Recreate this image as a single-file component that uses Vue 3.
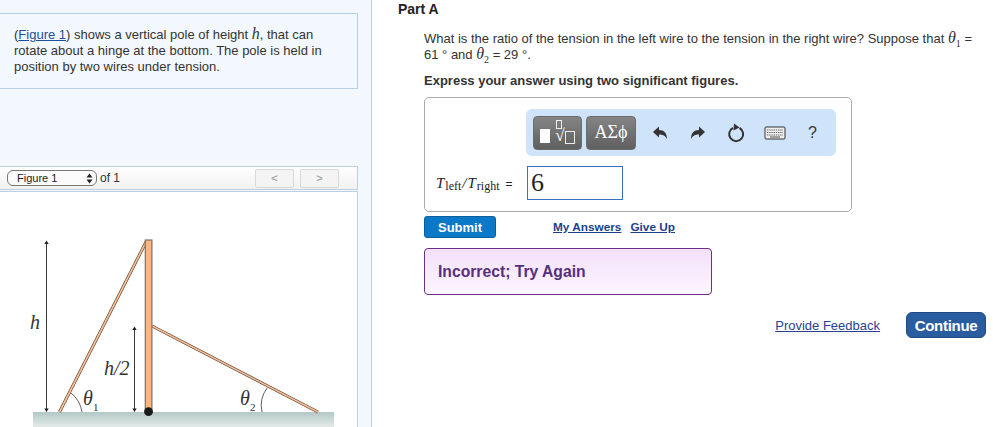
<template>
  <div class="page">
    <aside class="sidebar">
      <div class="statement">
        (<a href="#" class="fig-link">Figure 1</a>) shows a vertical pole of height <i class="math">h</i>, that can<br />
        rotate about a hinge at the bottom. The pole is held in<br />
        position by two wires under tension.
      </div>
      <div class="fig-bar">
        <div class="fig-select">
          <span>Figure 1</span>
          <svg width="7" height="11" viewBox="0 0 7 11"><path d="M3.5 0.5 L6.5 4.5 H0.5Z M3.5 10.5 L6.5 6.5 H0.5Z" fill="#222" /></svg>
        </div>
        <span class="of">of 1</span>
        <div class="pager">
          <button class="page-btn">&lt;</button>
          <button class="page-btn">&gt;</button>
        </div>
      </div>
      <div class="fig-box">
        <svg class="diagram" width="357" height="236" viewBox="0 191 357 236">
          <defs>
            <linearGradient id="ground" x1="0" y1="0" x2="0" y2="1">
              <stop offset="0" stop-color="#b3c8c5" />
              <stop offset="1" stop-color="#e3ebe9" />
            </linearGradient>
          </defs>
          <rect x="33" y="412" width="301" height="15" fill="url(#ground)" />
          <line x1="146" y1="242" x2="59.5" y2="412" stroke="#5a473a" stroke-width="3" />
          <line x1="146" y1="242" x2="59.5" y2="412" stroke="#f8bd92" stroke-width="1.7" />
          <line x1="152" y1="326" x2="318" y2="412" stroke="#5a473a" stroke-width="3" />
          <line x1="152" y1="326" x2="318" y2="412" stroke="#f8bd92" stroke-width="1.7" />
          <rect x="145.3" y="240" width="6.6" height="172" fill="#f8b587" stroke="#77716c" stroke-width="1.2" />
          <circle cx="148.5" cy="411.7" r="4.4" fill="#1a1a1a" />
          <g stroke="#222" stroke-width="0.9" fill="#222">
            <line x1="46.5" y1="242" x2="46.5" y2="411" />
            <path d="M46.5 240.5 l-2.2 3.5 h4.4z M46.5 412 l-2.2 -3.5 h4.4z" stroke="none" />
            <line x1="134.5" y1="328" x2="134.5" y2="411" />
            <path d="M134.5 326.5 l-2.2 3.5 h4.4z M134.5 412 l-2.2 -3.5 h4.4z" stroke="none" />
          </g>
          <path d="M71 393 Q80 400 82 412" fill="none" stroke="#333" stroke-width="0.8" />
          <path d="M267 388 Q259 399 262 412" fill="none" stroke="#333" stroke-width="0.8" />
          <text x="30" y="329" class="lbl">h</text>
          <text x="104" y="375" class="lbl">h/2</text>
          <text x="83" y="405" class="lbl">θ</text>
          <text x="93" y="411" class="sub">1</text>
          <text x="240" y="405" class="lbl">θ</text>
          <text x="250" y="411" class="sub">2</text>
        </svg>
      </div>
    </aside>

    <main class="main">
      <h2 class="part">Part A</h2>
      <div class="question">
        <p class="prompt">
          What is the ratio of the tension in the left wire to the tension in the right wire? Suppose that
          <i class="math">θ</i><sub>1</sub> =<br />61 ° and <i class="math">θ</i><sub>2</sub> = 29 °.
        </p>
        <p class="hint">Express your answer using two significant figures.</p>

        <div class="answer">
          <div class="toolbar">
            <button class="tool">
              <span class="blk"></span>
              <span class="root">
                <span class="root-small"></span>
                <span class="root-sign">√</span>
                <span class="root-box"></span>
              </span>
            </button>
            <button class="tool greek">ΑΣϕ</button>
            <svg class="ico undo" width="20" height="20" viewBox="0 0 20 20"><path d="M3 9 L9 3.5 V7 C14 7 17 10 17 16 C15 12.5 13 11.5 9 11.5 V14.5Z" fill="#333" /></svg>
            <svg class="ico" width="20" height="20" viewBox="0 0 20 20"><path d="M17 9 L11 3.5 V7 C6 7 3 10 3 16 C5 12.5 7 11.5 11 11.5 V14.5Z" fill="#333" /></svg>
            <svg class="ico" width="20" height="20" viewBox="0 0 20 20"><path d="M7 4.9 A7 7 0 1 0 13.5 5" fill="none" stroke="#333" stroke-width="2" /><path d="M8 0.5 L13.5 4.5 L7.5 7.5Z" fill="#333" /></svg>
            <svg class="ico" width="22" height="14" viewBox="0 0 22 14">
              <rect x="1" y="1" width="20" height="12" rx="1" fill="#eee" stroke="#333" stroke-width="1" />
              <path d="M3 4 H19 M3 6.5 H19 M3 9 H19" stroke="#666" stroke-width="1" stroke-dasharray="1.4 0.8" />
              <path d="M6 11 H16" stroke="#555" stroke-width="1" />
            </svg>
            <span class="help">?</span>
          </div>
          <div class="entry">
            <span class="formula"><i>T</i><span class="fs">left</span><i class="slash">/</i><i>T</i><span class="fs">right</span><span class="eq">=</span></span>
            <div class="input">6</div>
          </div>
        </div>

        <div class="actions">
          <button class="submit">Submit</button>
          <div class="links">
            <a href="#">My Answers</a>
            <a href="#">Give Up</a>
          </div>
        </div>

        <div class="feedback">Incorrect; Try Again</div>
      </div>
      <div class="bottom">
        <a href="#" class="provide">Provide Feedback</a>
        <button class="continue">Continue</button>
      </div>
    </main>
  </div>
</template>

<script setup>
</script>

<style>
html, body {
  margin: 0;
  overflow: hidden;
  background: #fff;
}
</style>

<style scoped>
.page {
  display: grid;
  grid-template-columns: 372px 1fr;
  width: 993px;
  height: 427px;
  overflow: hidden;
  font-family: "Liberation Sans", Arial, sans-serif;
  color: #333;
  font-size: 13px;
}
.sidebar {
  box-sizing: border-box;
  height: 427px;
  padding: 13px 13px 0 0;
  background: #f3f8fe;
  border-right: 1px solid #b9cfe2;
}
.statement {
  box-sizing: border-box;
  height: 76px;
  padding: 13px 14px 0;
  line-height: 16px;
  border: 1px solid #b9cfe2;
  border-left: none;
}
.fig-link {
  color: #1c4f9c;
}
.math {
  font-family: "Liberation Serif", serif;
  font-style: italic;
  font-size: 16px;
  line-height: 0;
}
.fig-bar {
  box-sizing: border-box;
  display: flex;
  align-items: center;
  height: 24px;
  margin-top: 77px;
  padding-left: 7px;
  background: linear-gradient(#fff, #f1f1f1);
  border: 1px solid #b9cfe2;
  border-left: none;
  font-size: 12px;
}
.fig-select {
  box-sizing: border-box;
  display: flex;
  align-items: center;
  justify-content: space-between;
  width: 90px;
  height: 16px;
  padding: 0 3px 0 9px;
  border: 1px solid #777;
  border-radius: 6px;
  background: #fbfbfb;
  color: #222;
  font-size: 11px;
}
.of {
  margin-left: 3px;
}
.pager {
  display: flex;
  gap: 6px;
  margin-left: auto;
  margin-right: 18px;
}
.page-btn {
  width: 39px;
  height: 19px;
  padding: 0;
  border: 1px solid #d8d8d8;
  border-radius: 2px;
  background: #f4f4f4;
  color: #aaa;
  font: bold 11px "Liberation Sans", sans-serif;
}
.fig-box {
  box-sizing: border-box;
  height: 236px;
  margin-top: 1px;
  background: #fff;
  border: 1px solid #b9cfe2;
  border-left: none;
  border-bottom: none;
  overflow: hidden;
}
.diagram {
  display: block;
  margin-top: -1px;
}
.lbl {
  font: italic 20px "Liberation Serif", serif;
  fill: #333;
}
.sub {
  font: 11px "Liberation Serif", serif;
  fill: #333;
}
.main {
  padding-left: 26px;
}
.part {
  margin: 1px 0 0;
  font-size: 14px;
  line-height: 16px;
  font-weight: bold;
  color: #222;
}
.question {
  width: 560px;
  margin-left: 26px;
}
.prompt {
  margin: 14px 0 0;
  line-height: 16px;
  font-size: 13px;
}
.prompt sub {
  font: 10px "Liberation Serif", serif;
  line-height: 0;
}
.hint {
  margin: 10px 0 0;
  font-size: 13px;
  line-height: 16px;
  font-weight: bold;
}
.answer {
  box-sizing: border-box;
  width: 428px;
  height: 115px;
  margin-top: 8px;
  padding: 11px 0 0 11px;
  border: 1px solid #aaa;
  border-radius: 5px;
}
.toolbar {
  box-sizing: border-box;
  display: flex;
  align-items: center;
  width: 310px;
  height: 47px;
  margin-left: 90px;
  padding-left: 7px;
  background: #cfe4fb;
  border-radius: 6px;
}
.tool {
  box-sizing: border-box;
  display: flex;
  align-items: center;
  justify-content: center;
  width: 49px;
  height: 34px;
  padding: 0;
  margin-right: 4px;
  border: 1px solid #6c6c6c;
  border-radius: 4px;
  background: linear-gradient(#858585, #5f5f5f);
  color: #fff;
}
.greek {
  width: 50px;
  margin-right: 0;
  font: 18px "Liberation Serif", serif;
}
.blk {
  width: 10px;
  height: 14px;
  margin-top: 7px;
  background: #fff;
}
.root {
  display: flex;
  align-items: flex-end;
  position: relative;
  margin-left: 5px;
  height: 26px;
}
.root-small {
  width: 4px;
  height: 7px;
  border: 1px solid #eee;
  position: absolute;
  left: 1px;
  top: 0;
}
.root-sign {
  margin-top: 7px;
  font: 17px/20px "Liberation Serif", serif;
}
.root-box {
  width: 8px;
  height: 11px;
  margin-bottom: 2px;
  border: 1px solid #eee;
}
.ico {
  flex: none;
  margin-left: 18px;
}
.undo {
  margin-left: 14px;
}
.help {
  margin-left: 22px;
  font-size: 16px;
  color: #333;
}
.entry {
  display: flex;
  align-items: center;
  height: 34px;
  margin-top: 10px;
}
.formula {
  display: flex;
  align-items: baseline;
  width: 91px;
  font: 15px "Liberation Serif", serif;
  color: #222;
}
.fs {
  position: relative;
  top: 2px;
  margin-left: 1px;
  font-size: 12px;
}
.slash {
  margin: 0 1px;
}
.eq {
  margin-left: 6px;
  font: 12px "Liberation Sans", sans-serif;
}
.input {
  box-sizing: border-box;
  width: 96px;
  height: 34px;
  padding-left: 3px;
  border: 1px solid #3a6fc4;
  font: 26px/32px "Liberation Serif", serif;
  color: #222;
}
.actions {
  display: flex;
  align-items: center;
  margin-top: 4px;
}
.submit {
  box-sizing: border-box;
  width: 72px;
  height: 22px;
  padding: 0;
  border: 1px solid #0b5f9e;
  border-radius: 3px;
  background: #0b78c8;
  color: #fff;
  font: bold 13px "Liberation Sans", sans-serif;
}
.links {
  display: flex;
  gap: 9px;
  margin-left: 57px;
  font-size: 11.8px;
  font-weight: bold;
}
.links a {
  color: #1c3f8f;
}
.feedback {
  box-sizing: border-box;
  width: 288px;
  height: 47px;
  margin-top: 10px;
  padding-left: 13px;
  border: 1px solid #6b2f8a;
  border-radius: 4px;
  background: linear-gradient(#f3e0fb, #fdf5ff);
  color: #55307a;
  font-size: 15.7px;
  line-height: 45px;
  font-weight: bold;
}
.bottom {
  display: flex;
  align-items: center;
  justify-content: flex-end;
  width: 588px;
  margin-top: 17px;
}
.provide {
  color: #2a3f8f;
  font-size: 13px;
  margin-right: 26px;
}
.continue {
  box-sizing: border-box;
  width: 80px;
  height: 26px;
  padding: 0;
  border: 1px solid #1d4a85;
  border-radius: 6px;
  background: #2a5d9f;
  color: #fff;
  font: bold 15px "Liberation Sans", sans-serif;
  letter-spacing: -0.3px;
}
</style>
